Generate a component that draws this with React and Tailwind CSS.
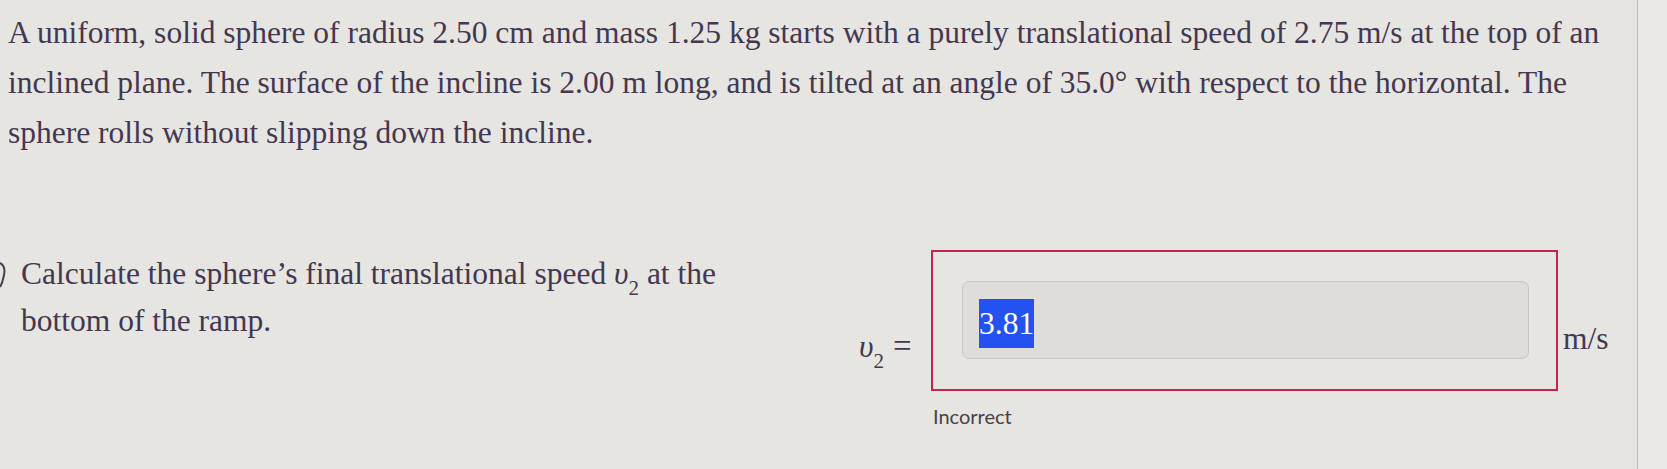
export default function App() {
  return (
    <div className="flex w-[1667px] h-[469px] overflow-hidden bg-[#e7e5e1] text-[#433850] font-['Liberation_Serif','Times_New_Roman',serif]">
      <div className="w-[1637px] shrink-0">
        <div className="pl-[8px] pt-[8px] text-[31.5px] leading-[50px] whitespace-nowrap">
          <div>A uniform, solid sphere of radius 2.50 cm and mass 1.25 kg starts with a purely translational speed of 2.75 m/s at the top of an</div>
          <div>inclined plane. The surface of the incline is 2.00 m long, and is tilted at an angle of 35.0° with respect to the horizontal. The</div>
          <div>sphere rolls without slipping down the incline.</div>
        </div>

        <div className="flex items-start mt-[92px]">
          <svg width="6" height="30" viewBox="0 0 6 30" className="mt-[10px] shrink-0">
            <path d="M0 3 C4 5 5 10 4 15 C3 20 2 24 0 27" stroke="#4a4050" strokeWidth="2" fill="none" />
          </svg>
          <div className="ml-[15px] w-[838px] shrink-0 text-[31.5px] leading-[47px] whitespace-nowrap">
            <div>
              Calculate the sphere’s final translational speed <span className="italic">υ</span>
              <sub className="text-[21px] align-[-6px] leading-none">2</sub> at the
            </div>
            <div>bottom of the ramp.</div>
          </div>

          <div className="flex flex-col">
            <div className="flex items-start">
              <div className="w-[64px] shrink-0 mt-[76px] text-[31.5px] leading-[40px] whitespace-nowrap">
                <span className="italic">υ</span>
                <sub className="text-[21px] align-[-6px] leading-none">2</sub>
                <span className="ml-[9px] text-[33px]">=</span>
              </div>
              <div className="ml-[8px] w-[627px] h-[141px] border-2 border-[#c2264e] pt-[29px] pl-[29px]">
                <div className="w-[567px] h-[78px] rounded-[7px] border border-[#c9c7c3] bg-[#dfddd9] pt-[17px] pl-[16px]">
                  <span className="inline-block h-[49px] bg-[#2352f0] text-white text-[31.5px] leading-[49px]">3.81</span>
                </div>
              </div>
              <div className="ml-[5px] mt-[71px] text-[31.5px] leading-[36px]">m/s</div>
            </div>
            <div className="ml-[74px] mt-[14px] font-['Lato','Open_Sans',sans-serif] text-[20px] leading-[22px] text-[#474147]">Incorrect</div>
          </div>
        </div>
      </div>
      <div className="flex-1 border-l border-[#bdbbb7] bg-[#eae9e6]"></div>
    </div>
  );
}
